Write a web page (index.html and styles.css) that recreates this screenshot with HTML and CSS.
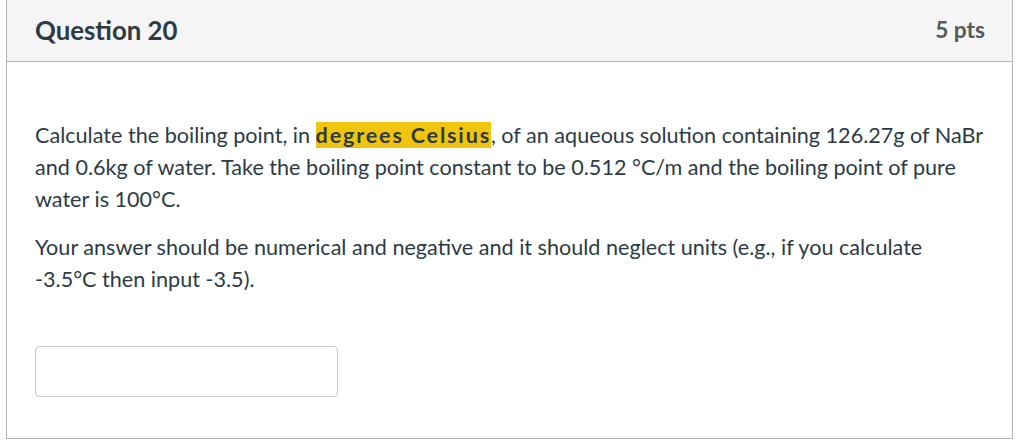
FILE: index.html
```html
<!DOCTYPE html>
<html lang="en">
<head>
<meta charset="utf-8">
<title>Question 20</title>
<link rel="stylesheet" href="styles.css">
</head>
<body>
<div class="question">
  <div class="question-header">
    <h2 class="question-title">Question 20</h2>
    <span class="question-points">5 pts</span>
  </div>
  <div class="question-body">
    <p>Calculate the boiling point, in <strong class="hl">degrees Celsius</strong>, of an aqueous solution containing 126.27g of NaBr and 0.6kg of water. Take the boiling point constant to be 0.512 &deg;C/m and the boiling point of pure water is 100&deg;C.</p>
    <p>Your answer should be numerical and negative and it should neglect units (e.g., if you calculate -3.5&deg;C then input -3.5).</p>
    <div class="answer">
      <input class="answer-input" type="text" aria-label="Answer">
    </div>
  </div>
</div>
</body>
</html>
```

FILE: styles.css
```css
html, body {
  margin: 0;
  padding: 0;
  background: #ffffff;
}

body {
  font-family: Lato, "Open Sans", sans-serif;
  color: #2d3b45;
  padding: 0 6px;
}

.question {
  border: 1px solid #b5b5b5;
  border-top: none;
  height: 439px;
  box-sizing: border-box;
}

.question-header {
  display: flex;
  align-items: center;
  justify-content: space-between;
  height: 62px;
  box-sizing: border-box;
  padding: 0 27px 0 28px;
  background: #f5f5f5;
  border-bottom: 1px solid #b5b5b5;
}

.question-title {
  margin: 0;
  font-size: 25.8px;
  font-weight: 700;
  line-height: 1;
  color: #2d3b45;
}

.question-points {
  font-size: 22.7px;
  font-weight: 700;
  line-height: 1;
  color: #555a5e;
}

.question-body {
  padding: 57px 28px 0 28px;
  font-size: 21.6px;
  line-height: 32px;
}

.question-body p {
  margin: 0 0 16px 0;
}

.hl {
  background: #f1c40f;
  font-weight: 700;
  letter-spacing: 1.8px;
}

.answer {
  padding-top: 35px;
}

.answer-input {
  display: block;
  width: 303px;
  height: 51px;
  box-sizing: border-box;
  border: 1px solid #c7c7c7;
  border-radius: 4px;
  background: #fff;
  margin: 0;
  padding: 0 10px;
}
```
